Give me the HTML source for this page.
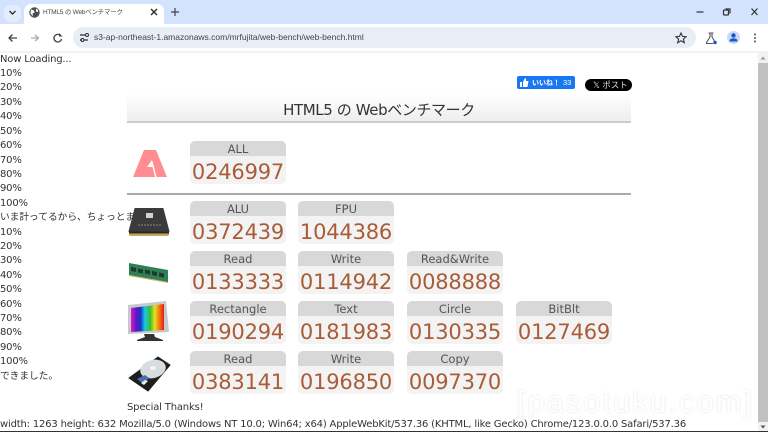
<!DOCTYPE html>
<html lang="ja"><head><meta charset="utf-8"><title>HTML5 の Webベンチマーク</title>
<style>
*{box-sizing:border-box}
html,body{margin:0;padding:0;width:768px;height:432px;overflow:hidden;background:#fff}
body{position:relative;font-family:"DejaVu Sans","Noto Sans CJK JP",sans-serif;color:#333}
.a{position:absolute;white-space:nowrap}
.l{position:absolute;left:0;font-size:10px;letter-spacing:-.18px;line-height:15px;white-space:nowrap;color:#333}
.j{font-size:9.7px;letter-spacing:0}
.b{position:absolute;width:96px;height:43px;background:#f3f3f3;border-radius:5px;overflow:hidden;text-align:center}
.b i{display:block;font-style:normal;height:15px;line-height:17px;background:#d8d8d8;font-size:11.5px;color:#555}
.b b{display:block;font-weight:normal;font-size:21px;letter-spacing:-.2px;line-height:32px;color:#a95c38}
.ui{font-family:"Liberation Sans","Noto Sans CJK JP",sans-serif}
</style></head><body>
<!-- browser chrome -->
<div class="a" style="left:0;top:0;width:768px;height:24px;background:#d3e3fd"></div>
<div class="a" style="left:4px;top:5px;width:17px;height:17px;border-radius:6px;background:#e4edfc"></div>
<svg class="a" style="left:8px;top:9px" width="9" height="8" viewBox="0 0 9 8"><path d="M1.5 2l3 3 3-3" fill="none" stroke="#333" stroke-width="1.4"/></svg>
<div class="a" style="left:24px;top:4px;width:140px;height:20px;background:#fff;border-radius:7px 7px 0 0"></div>
<svg class="a" style="left:29px;top:7px" width="11" height="11" viewBox="0 0 11 11"><circle cx="5.5" cy="5.5" r="5.2" fill="#4a4f55"/><path d="M2 2.5l3 1 .5 2-2 1 .5 3-2.5-3zM7 1.5l2 1.5 0 2-2-.5z" fill="#fff"/></svg>
<div class="a ui" style="left:43px;top:7px;font-size:6.4px;letter-spacing:-.15px;line-height:11px;color:#444">HTML5 の Webベンチマーク</div>
<svg class="a" style="left:150px;top:8px" width="8" height="8" viewBox="0 0 8 8"><path d="M1 1l6 6M7 1l-6 6" stroke="#333" stroke-width="1.5"/></svg>
<svg class="a" style="left:170px;top:7px" width="10" height="10" viewBox="0 0 10 10"><path d="M5 1v8M1 5h8" stroke="#444" stroke-width="1.2"/></svg>
<svg class="a" style="left:695px;top:6px" width="70" height="12" viewBox="0 0 70 12"><path d="M1.500 6h7" stroke="#333" stroke-width="1.2"/><rect x="28.500" y="4" width="5" height="5" rx="1" fill="none" stroke="#333" stroke-width="1.2"/><path d="M30.500 3h4.500v4.500" fill="none" stroke="#333" stroke-width="1.200"/><path d="M56.500 2.500l6 6.500M62.500 2.500l-6 6.500" stroke="#333" stroke-width="1.200"/></svg>
<div class="a" style="left:0;top:24px;width:768px;height:27px;background:#fff;border-radius:7px 7px 0 0"></div>
<div class="a" style="left:0;top:51px;width:768px;height:2px;background:#f0f2f5"></div>
<svg class="a" style="left:7px;top:32px" width="60" height="12" viewBox="0 0 60 12"><path d="M2 6h8M5.500 2.500L2 6l3.500 3.500" fill="none" stroke="#444" stroke-width="1.300"/><path d="M24 6h7M28 3l3.500 3L28 9" fill="none" stroke="#aaa" stroke-width="1.200"/><path d="M53.500 3.500A3.800 3.800 0 1 0 54.500 7" fill="none" stroke="#444" stroke-width="1.300"/><path d="M52 1v3.500h3.500z" fill="#444"/></svg>
<div class="a" style="left:73px;top:27px;width:623px;height:21px;border-radius:11px;background:#e9edf6"></div>
<svg class="a" style="left:79px;top:32px" width="10" height="11" viewBox="0 0 10 11"><path d="M1 3h5M1 8h2M5 8h4" stroke="#333" stroke-width="1.300"/><circle cx="8" cy="3" r="1.500" fill="none" stroke="#333"/><circle cx="3.500" cy="8" r="1.500" fill="none" stroke="#333"/></svg>
<div class="a ui" style="left:94px;top:32px;font-size:8.5px;line-height:11px;color:#444">s3-ap-northeast-1.amazonaws.com/mrfujita/web-bench/web-bench.html</div>
<svg class="a" style="left:675px;top:32px" width="12" height="12" viewBox="0 0 12 12"><path d="M6 1l1.500 3.400 3.700.3-2.800 2.400.9 3.600L6 8.800 2.700 10.700l.9-3.600L.8 4.700l3.700-.3z" fill="none" stroke="#333" stroke-width="1.100"/></svg>
<svg class="a" style="left:705px;top:32px" width="14" height="13" viewBox="0 0 14 13"><path d="M3.500 1h5M5 1v4L1.500 10.500q-.5 1 .5 1h6M7 1v4l2.500 4" fill="none" stroke="#555" stroke-width="1.100"/><circle cx="10" cy="10.500" r="1.800" fill="#1a56c4"/></svg>
<div class="a" style="left:727px;top:31px;width:13px;height:13px;border-radius:50%;background:#c9d9f6"></div>
<svg class="a" style="left:729px;top:33px" width="9" height="9" viewBox="0 0 9 9"><circle cx="4.500" cy="2.500" r="2.200" fill="#1a56c4"/><path d="M.5 8.500q0-3.200 4-3.200t4 3.200z" fill="#1a56c4"/></svg>
<svg class="a" style="left:753px;top:33px" width="4" height="10" viewBox="0 0 4 10"><circle cx="2" cy="1.500" r="1" fill="#555"/><circle cx="2" cy="5" r="1" fill="#555"/><circle cx="2" cy="8.500" r="1" fill="#555"/></svg>
<!-- scrollbar -->
<div class="a" style="left:758px;top:53px;width:10px;height:379px;background:#f1f1f1"></div>
<div class="a" style="left:758px;top:63px;width:10px;height:359px;background:#c1c1c1"></div>
<svg class="a" style="left:760px;top:56px" width="6" height="4" viewBox="0 0 6 4"><path d="M3 .5L5.500 3.500H.5z" fill="#9a9a9a"/></svg>
<svg class="a" style="left:760px;top:425px" width="6" height="4" viewBox="0 0 6 4"><path d="M3 3.500L5.500 .5H.5z" fill="#555"/></svg>
<!-- log -->
<div class="l" style="top:52px">Now Loading...</div>
<div class="l" style="top:66px">10%</div><div class="l" style="top:80px">20%</div><div class="l" style="top:95px">30%</div><div class="l" style="top:109px">40%</div><div class="l" style="top:124px">50%</div><div class="l" style="top:138px">60%</div><div class="l" style="top:153px">70%</div><div class="l" style="top:167px">80%</div><div class="l" style="top:181px">90%</div><div class="l" style="top:196px">100%</div>
<div class="l j" style="top:210px">いま計ってるから、ちょっとま</div>
<div class="l" style="top:225px">10%</div><div class="l" style="top:239px">20%</div><div class="l" style="top:253px">30%</div><div class="l" style="top:268px">40%</div><div class="l" style="top:282px">50%</div><div class="l" style="top:297px">60%</div><div class="l" style="top:311px">70%</div><div class="l" style="top:325px">80%</div><div class="l" style="top:340px">90%</div><div class="l" style="top:354px">100%</div>
<div class="l j" style="top:369px">できました。</div>
<div class="l" style="left:127px;top:400px">Special Thanks!</div>
<div class="l" style="top:417px">width: 1263 height: 632 Mozilla/5.0 (Windows NT 10.0; Win64; x64) AppleWebKit/537.36 (KHTML, like Gecko) Chrome/123.0.0.0 Safari/537.36</div>
<div class="a" style="left:0;top:431px;width:768px;height:1px;background:#333"></div>
<!-- watermark -->
<div class="a ui" style="left:517px;top:384px;font-size:31px;line-height:36px;letter-spacing:1.900px;color:#fff;text-shadow:0 0 2px #dedede">[pasotuku.com]</div>
<!-- social -->
<div class="a" style="left:517px;top:76px;width:58px;height:13px;background:#1877f2;border-radius:2px"></div>
<svg class="a" style="left:520px;top:78px" width="9" height="9" viewBox="0 0 9 9"><path d="M0 4h2v5H0zM3 4l2-4q1.500 0 1 3h2.500l-1 6H3z" fill="#fff"/></svg>
<div class="a ui" style="left:532px;top:76px;font-size:7px;line-height:13px;font-weight:bold;color:#fff">いいね！<span style="font-weight:normal;font-size:7.500px;margin-left:3px">33</span></div>
<div class="a" style="left:585px;top:79px;width:47px;height:12px;background:#000;border-radius:6px"></div>
<div class="a ui" style="left:593px;top:79px;font-size:8.5px;line-height:12px;color:#ddd">𝕏 ポスト</div>
<!-- title -->
<div class="a" style="left:127px;top:94px;width:504px;height:29px;background:linear-gradient(#fff,#eee);border-bottom:2px solid #ccc"></div>
<div class="a" style="left:127px;top:99px;width:504px;text-align:center;font-size:15px;letter-spacing:-.4px;line-height:22px;color:#333">HTML5 の Webベンチマーク</div>
<!-- all -->
<svg class="a" style="left:133px;top:149px" width="34" height="29" viewBox="0 0 34 29"><path d="M0 28L11 1h12l11 27z" fill="#ff8d92"/><path d="M19 11l-5 7h5.500l2.500 10h1.500L20.500 16z" fill="#fff"/></svg>
<div class="a" style="left:127px;top:193px;width:504px;height:1.500px;background:#aaa"></div>
<!-- cpu -->
<svg class="a" style="left:128px;top:207px" width="42" height="31" viewBox="0 0 42 31"><path d="M7 1.500h28l6 23H1z" fill="#3b3b3b" stroke="#3b3b3b" stroke-linejoin="round"/><path d="M1 24.500h40v2q0 1-2 1H3q-2 0-2-1z" fill="#2a2a2a"/><path d="M1 26.500h40v1q0 1.500-2 1.500H3q-2 0-2-1.500z" fill="#c5a85c"/><rect x="18" y="6" width="7" height="5" fill="#cfd2d6"/><path d="M10 18h23" stroke="#6e6e6e" stroke-width="1.500" stroke-dasharray="2 1"/></svg>
<!-- ram -->
<svg class="a" style="left:128px;top:260px" width="42" height="24" viewBox="0 0 42 24"><path d="M1 3L40 10v12L1 15z" fill="#2f8055"/><path d="M3 7l5 1v4l-5-1zM10 8.500l5 1v4l-5-1zM17 9.500l5 1v4l-5-1zM24 11l5 1v4l-5-1zM31 12.500l5 1v4l-5-1z" fill="#1d3a2c"/><path d="M1 15L40 22v1L1 16z" fill="#cfae5c"/></svg>
<!-- monitor -->
<svg class="a" style="left:127px;top:301px" width="43" height="42" viewBox="0 0 43 42"><defs><linearGradient id="g" x1="0" x2="1" y1="0" y2="0"><stop offset="0" stop-color="#e018c8"/><stop offset=".16" stop-color="#5b17c0"/><stop offset=".3" stop-color="#1438d0"/><stop offset=".42" stop-color="#20c8dc"/><stop offset=".58" stop-color="#36c038"/><stop offset=".72" stop-color="#e8e020"/><stop offset=".85" stop-color="#f08010"/><stop offset="1" stop-color="#e81818"/></linearGradient></defs><path d="M1 4L39 0l3 31-41 2z" fill="#c6c8cc"/><path d="M4 7l33-4v26L4 31z" fill="url(#g)"/><path d="M17 33h10l1 3 8 3v1H10v-1l8-3z" fill="#333"/></svg>
<!-- hdd -->
<svg class="a" style="left:128px;top:356px" width="43" height="36" viewBox="0 0 43 36"><path d="M1 22L30 1l12 8-22 26z" fill="#1e1e1e" stroke="#1e1e1e" stroke-width="1" stroke-linejoin="round"/><ellipse cx="25" cy="13" rx="13" ry="9" fill="#d9dcdf" transform="rotate(-15 25 13)"/><ellipse cx="25" cy="12" rx="3" ry="2" fill="#f5f5f5"/><path d="M9 23l8-4 4 3-6 6z" fill="#4a6fb5"/><path d="M13 27l4-3 3 1-4 4z" fill="#eee"/></svg>
<!-- boxes -->
<div class="b" style="left:190px;top:141px"><i>ALL</i><b>0246997</b></div>
<div class="b" style="left:190px;top:201px"><i>ALU</i><b>0372439</b></div>
<div class="b" style="left:298px;top:201px"><i>FPU</i><b>1044386</b></div>
<div class="b" style="left:190px;top:251px"><i>Read</i><b>0133333</b></div>
<div class="b" style="left:298px;top:251px"><i>Write</i><b>0114942</b></div>
<div class="b" style="left:407px;top:251px"><i>Read&amp;Write</i><b>0088888</b></div>
<div class="b" style="left:190px;top:301px"><i>Rectangle</i><b>0190294</b></div>
<div class="b" style="left:298px;top:301px"><i>Text</i><b>0181983</b></div>
<div class="b" style="left:407px;top:301px"><i>Circle</i><b>0130335</b></div>
<div class="b" style="left:516px;top:301px"><i>BitBlt</i><b>0127469</b></div>
<div class="b" style="left:190px;top:351px"><i>Read</i><b>0383141</b></div>
<div class="b" style="left:298px;top:351px"><i>Write</i><b>0196850</b></div>
<div class="b" style="left:407px;top:351px"><i>Copy</i><b>0097370</b></div>
</body></html>
